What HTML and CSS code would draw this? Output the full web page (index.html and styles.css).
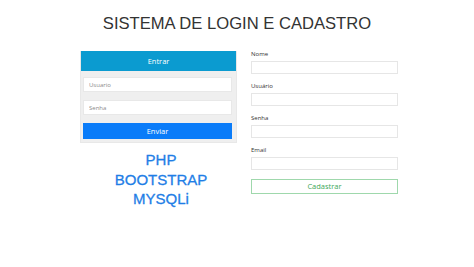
FILE: index.html
```html
<!DOCTYPE html>
<html lang="pt">
<head>
<meta charset="utf-8">
<title>Sistema de Login e Cadastro</title>
<link rel="stylesheet" href="styles.css">
</head>
<body>
<h1 class="title">SISTEMA DE LOGIN E CADASTRO</h1>
<div class="row">
  <div class="left">
    <div class="panel">
      <div class="panel-head">Entrar</div>
      <div class="panel-body">
        <input class="field" type="text" placeholder="Usuario">
        <input class="field" type="password" placeholder="Senha">
        <button class="btn-send" type="button">Enviar</button>
      </div>
    </div>
    <div class="tech">PHP<br>BOOTSTRAP<br>MYSQLi</div>
  </div>
  <form class="signup">
    <label class="lbl">Nome</label>
    <input class="rfield" type="text">
    <label class="lbl">Usuário</label>
    <input class="rfield" type="text">
    <label class="lbl">Senha</label>
    <input class="rfield" type="password">
    <label class="lbl">Email</label>
    <input class="rfield" type="email">
    <div class="btn-reg">Cadastrar</div>
  </form>
</div>
</body>
</html>
```
FILE: styles.css
```css
* { box-sizing: border-box; }
body {
  margin: 0;
  background: #fff;
  font-family: "Open Sans", "Noto Sans", sans-serif;
  width: 474px;
  height: 267px;
  overflow: hidden;
}
.title {
  margin: 14px 0 0;
  font-family: "Liberation Sans", Arial, sans-serif;
  font-weight: normal;
  font-size: 16.6px;
  line-height: 20px;
  color: #333;
  text-align: center;
}
.row {
  display: flex;
  gap: 14px;
  margin: 15px 0 0 80px;
  align-items: flex-start;
}
.left {
  width: 157px;
  margin-top: 2px;
}
.panel {
  background: #efefef;
  border: 1px solid #e8e8e8;
  border-top: none;
}
.panel-head {
  background: #0b9bd0;
  color: #fff;
  height: 20px;
  line-height: 20px;
  text-align: center;
  font-size: 7.5px;
}
.panel-body {
  display: flex;
  flex-direction: column;
  padding: 6px 4px 3px 2px;
}
.field {
  height: 15px;
  border: 1px solid #e8e8e8;
  background: #fff;
  font-family: inherit;
  font-size: 6px;
  padding: 0 0 0 5px;
  margin-bottom: 8px;
  outline: none;
}
.field::placeholder { color: #8a8a8a; }
.btn-send {
  height: 16px;
  border: none;
  background: #0a7cf9;
  color: #fff;
  font-family: inherit;
  font-size: 7.5px;
  padding: 0;
}
.tech {
  margin-top: 7px;
  text-align: center;
  font-family: "Liberation Sans", Arial, sans-serif;
  font-size: 15px;
  line-height: 19.5px;
  color: #1f7ee6;
  padding-left: 5px;
  -webkit-text-stroke: 0.3px #1f7ee6;
}
.signup {
  width: 147px;
  display: flex;
  flex-direction: column;
  margin: 0;
}
.lbl {
  font-size: 6px;
  line-height: 10px;
  color: #333;
  margin-bottom: 2px;
}
.rfield {
  height: 13px;
  border: 1px solid #e6e6e6;
  background: #fff;
  margin-bottom: 7px;
  outline: none;
  padding: 0;
}
.btn-reg {
  margin-top: 2px;
  height: 15px;
  line-height: 13px;
  border: 1px solid #9fd8ac;
  background: #fff;
  color: #3ea85a;
  font-size: 7.5px;
  text-align: center;
}
```
